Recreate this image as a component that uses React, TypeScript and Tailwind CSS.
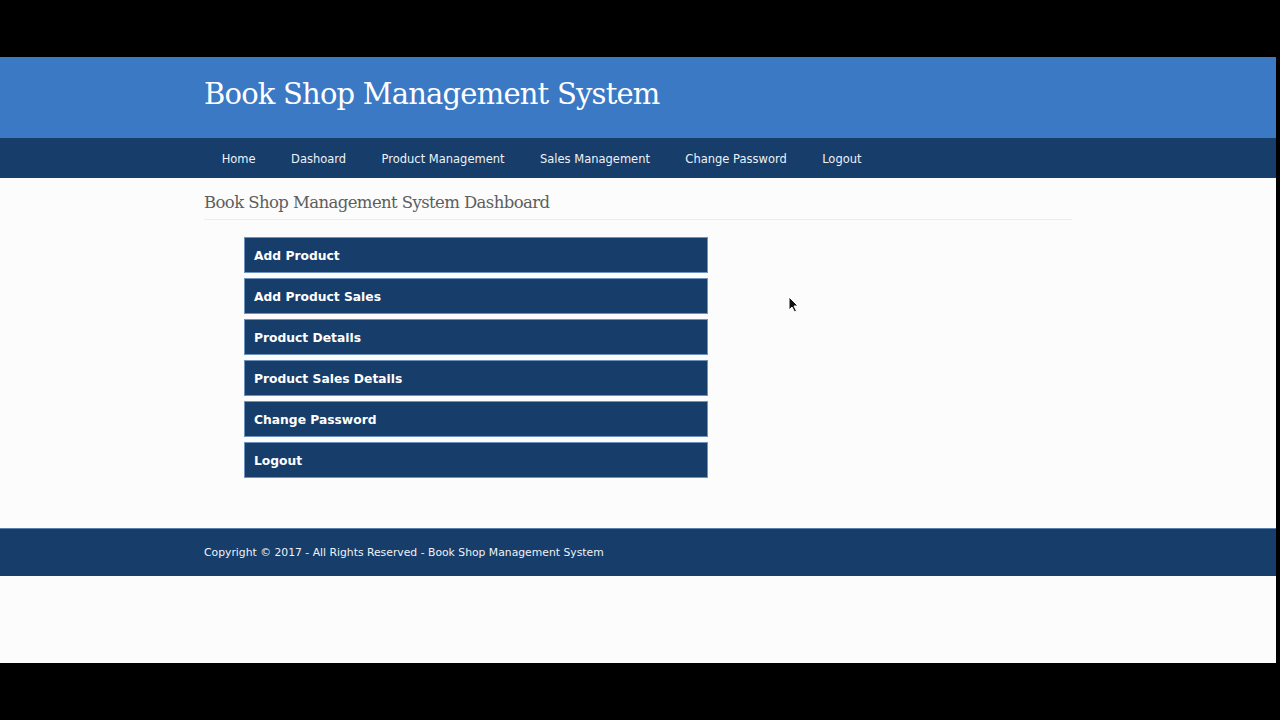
import React from "react";

const navItems = ["Home", "Dashoard", "Product Management", "Sales Management", "Change Password", "Logout"];
const buttons = ["Add Product", "Add Product Sales", "Product Details", "Product Sales Details", "Change Password", "Logout"];

export default function App() {
  return (
    <div className="w-[1280px] h-[720px] bg-black flex flex-col overflow-hidden">
      <div className="h-[57px] shrink-0" />
      <div className="flex h-[606px] shrink-0">
        <div className="w-[1276px] bg-[#fbfcfb] flex flex-col relative">
          <header className="h-[81px] bg-[#3b79c4] shrink-0">
            <div className="w-[868px] mx-auto pt-[17px]">
              <h1 className="text-white text-[29px] leading-[40px] font-['DejaVu_Serif',serif] tracking-[-0.8px]">
                Book Shop Management System
              </h1>
            </div>
          </header>
          <nav className="h-[40px] bg-[#173d6a] shrink-0">
            <ul className="w-[868px] mx-auto flex h-full items-center pt-[2px] font-['DejaVu_Sans',sans-serif] text-[11.5px] text-[#eef2f7]">
              {navItems.map((n) => (
                <li key={n} className="px-[17.7px] leading-[38px]">{n}</li>
              ))}
            </ul>
          </nav>
          <main className="h-[350px] shrink-0">
            <div className="w-[868px] mx-auto">
              <h2 className="pt-[13px] pb-[4px] text-[16.5px] leading-[24px] text-[#5e5e5e] font-['DejaVu_Serif',serif] tracking-[-0.6px] border-b border-[#ececec]">
                Book Shop Management System Dashboard
              </h2>
              <div className="ml-[40px] mt-[17px] w-[464px] flex flex-col gap-[5px]">
                {buttons.map((b) => (
                  <div
                    key={b}
                    className="h-[36px] bg-[#173d6a] border border-[#6f93bf] flex items-center pl-[9px] pt-[2px] text-white font-bold text-[12.3px] font-['DejaVu_Sans',sans-serif]"
                  >
                    {b}
                  </div>
                ))}
              </div>
            </div>
          </main>
          <footer className="h-[48px] bg-[#173d6a] shrink-0 border-t border-[#5a7fae]">
            <div className="w-[868px] mx-auto h-full flex items-center pt-[1px] font-['DejaVu_Sans',sans-serif] text-[10.8px] text-[#eef2f7]">
              Copyright © 2017 - All Rights Reserved - Book Shop Management System
            </div>
          </footer>
          <svg className="absolute left-[788px] top-[239px]" width="12" height="18" viewBox="0 0 12 18">
            <path d="M1 1 L1 14 L4 11 L6.5 16 L8.5 15 L6 10 L10 10 Z" fill="#111" stroke="#fff" strokeWidth="1" />
          </svg>
        </div>
        <div className="flex-1 bg-black" />
      </div>
      <div className="flex-1" />
    </div>
  );
}
